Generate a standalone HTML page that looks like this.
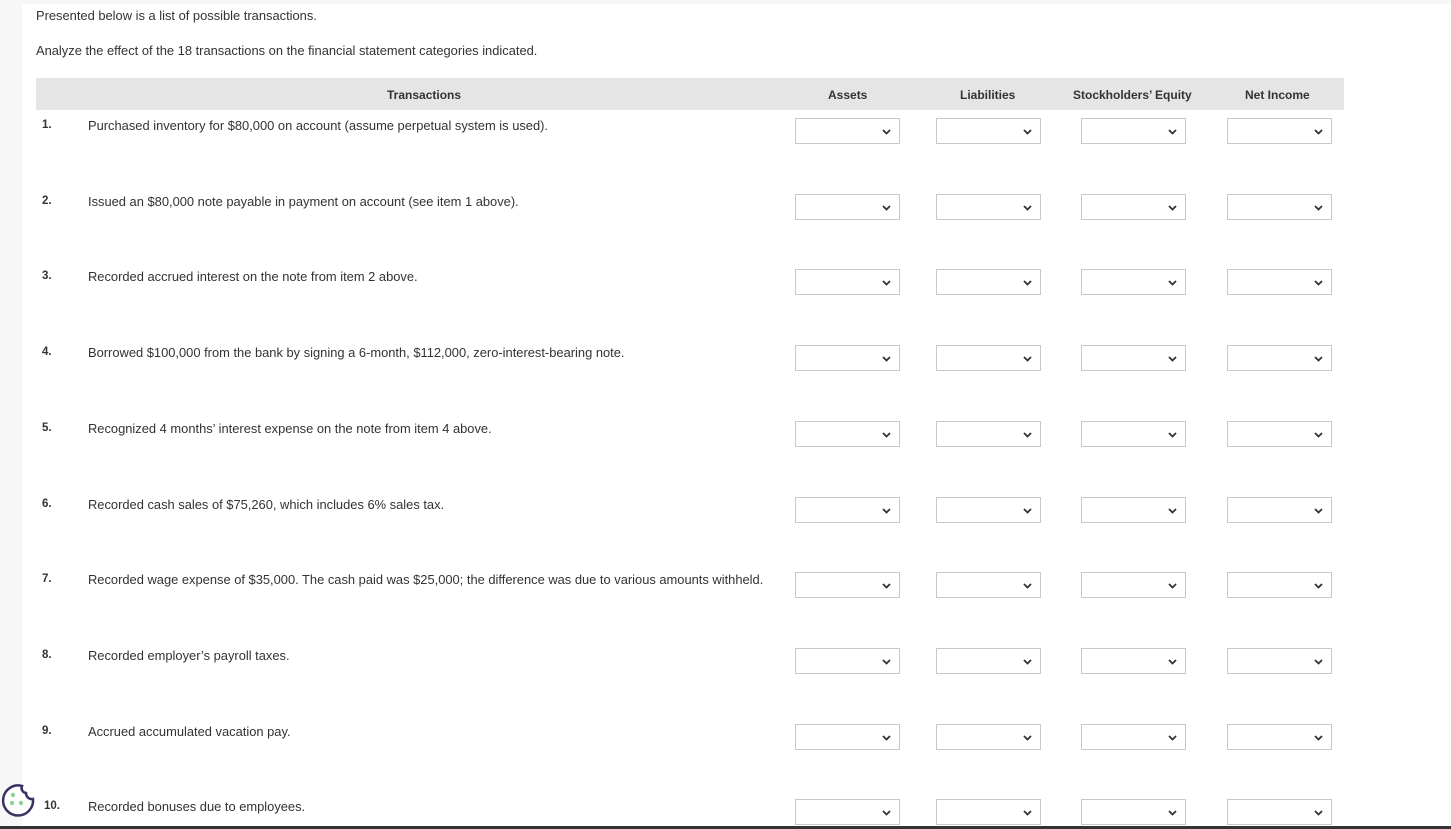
<!DOCTYPE html>
<html><head><style>
body{margin:0;width:1451px;height:829px;overflow:hidden;background:#fff;font-family:"Liberation Sans",sans-serif;color:#333;font-size:12.9px;position:relative}
.strip{position:absolute;left:0;top:0;width:22px;height:829px;background:#f7f7f7}
.top{position:absolute;left:0;top:0;width:1451px;height:4px;background:#f7f7f7}
.t{position:absolute;white-space:nowrap}
.hdr{position:absolute;left:36px;top:78px;width:1308px;height:32px;background:#e5e5e5}
.h{position:absolute;top:88px;font-weight:bold;font-size:12px;color:#333;text-align:center}
.sel{position:absolute;width:105px;height:26px;border:1px solid #c8c8c8;background:#fff;box-sizing:border-box}
.sel svg{position:absolute;right:8px;top:10px}
.num{position:absolute;left:42px;font-weight:bold;font-size:11.5px}
.bot{position:absolute;left:0;top:826px;width:1451px;height:3px;background:#333}
</style></head><body>
<div class="strip"></div><div class="top"></div>
<div class="t" style="left:36px;top:8px">Presented below is a list of possible transactions.</div>
<div class="t" style="left:36px;top:43px">Analyze the effect of the 18 transactions on the financial statement categories indicated.</div>
<div class="hdr"></div>
<div class="h" style="left:387px">Transactions</div>
<div class="h" style="left:828px">Assets</div>
<div class="h" style="left:960px">Liabilities</div>
<div class="h" style="left:1073px">Stockholders’ Equity</div>
<div class="h" style="left:1245px">Net Income</div>
<div id="rows"></div>
<svg style="position:absolute;left:0;top:782px" width="36" height="36" viewBox="0 0 36 36"><path d="M22 4 A15 15 0 1 0 33 17 A6 6 0 0 1 26 11 A5 5 0 0 1 22 4Z" fill="#fff" stroke="#3b2f63" stroke-width="2.5"/><circle cx="13" cy="13" r="2.2" fill="#8fcf9a"/><circle cx="12" cy="21" r="2.2" fill="#8fcf9a"/><circle cx="21" cy="21" r="2.2" fill="#8fcf9a"/></svg>
<div class="bot"></div>
<script>
var tx=["Purchased inventory for $80,000 on account (assume perpetual system is used).","Issued an $80,000 note payable in payment on account (see item 1 above).","Recorded accrued interest on the note from item 2 above.","Borrowed $100,000 from the bank by signing a 6-month, $112,000, zero-interest-bearing note.","Recognized 4 months’ interest expense on the note from item 4 above.","Recorded cash sales of $75,260, which includes 6% sales tax.","Recorded wage expense of $35,000. The cash paid was $25,000; the difference was due to various amounts withheld.","Recorded employer’s payroll taxes.","Accrued accumulated vacation pay.","Recorded bonuses due to employees."];
var h="",xs=[795,936,1081,1227];
for(var i=0;i<10;i++){var y=118+i*75.7;
h+='<div class="num" style="top:'+(y+1)+'px'+(i==9?';left:44px':'')+'">'+(i+1)+'.</div>';
h+='<div class="t" style="left:88px;top:'+(y)+'px">'+tx[i]+'</div>';
for(var j=0;j<4;j++)h+='<div class="sel" style="left:'+xs[j]+'px;top:'+(y)+'px"><svg width="9" height="6" viewBox="0 0 9 6"><path d="M1 1L4.5 4.5L8 1" fill="none" stroke="#333" stroke-width="1.8"/></svg></div>';}
document.getElementById("rows").innerHTML=h;
</script>
</body></html>
